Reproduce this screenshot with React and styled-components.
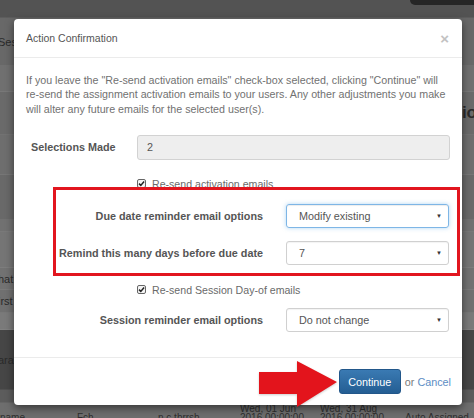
import React from 'react';
import styled, { createGlobalStyle } from 'styled-components';

const GlobalStyle = createGlobalStyle`
  html, body {
    margin: 0;
    padding: 0;
  }

  body {
    width: 474px;
    height: 418px;
    overflow: hidden;
    font-family: "Liberation Sans", Arial, sans-serif;
  }
`;

// the dimmed page behind the dialog, top to bottom
const bgRows = [
  { h: 18, bg: '#535353' },
  { h: 48, bg: '#686868', left: 'Ses' },
  { h: 26, bg: '#707070' },
  { h: 43, bg: '#6a6a6a', right: 'io', big: true },
  { h: 40, bg: '#6e6e6e' },
  { h: 45, bg: '#696969' },
  { h: 12, bg: '#717171' },
  { h: 36, bg: '#757575' },
  { h: 22, bg: '#727272', left: 'hat' },
  { h: 23, bg: '#707070', left: 'irst' },
  { h: 17, bg: '#7a7a7a' },
  { h: 60, bg: '#464646', left: 'ara' },
  { h: 13, bg: '#5c5c5c' },
];

function CheckBox() {
  return (
    <Box viewBox="0 0 9 9" width="9" height="9">
      <rect x="0.5" y="0.5" width="8" height="8" rx="1.5" fill="#f4f4f4" stroke="#666" />
      <path d="M2 4.6 L3.8 6.4 L7.1 2.4" fill="none" stroke="#222" strokeWidth="1.5" />
    </Box>
  );
}

function ActionConfirmation() {
  return (
    <Screen>
      <Page>
        { bgRows.map((row, i) => (
          <BgRow key={ i } $h={ row.h } $bg={ row.bg }>
            <BgText>{ row.left }</BgText>
            <BgText $big={ row.big }>{ row.right }</BgText>
          </BgRow>
        )) }
        <TableRow>
          <Cell $w={ 77 }>name</Cell>
          <Cell $w={ 81 }>Fch</Cell>
          <Cell $w={ 82 }>n.c.thrrsh</Cell>
          <Cell $w={ 80 }>Wed, 01 Jun<br />2016 00:00:00</Cell>
          <Cell $w={ 85 }>Wed, 31 Aug<br />2016 00:00:00</Cell>
          <Cell>Auto Assigned</Cell>
        </TableRow>
        <TopTab />
      </Page>

      <Modal>
        <Header>
          <Title>Action Confirmation</Title>
          <Close>×</Close>
        </Header>

        <Body>
          <Intro>
            If you leave the &quot;Re-send activation emails&quot; check-box selected, clicking &quot;Continue&quot; will
            <br />
            re-send the assignment activation emails to your users. Any other adjustments you make
            <br />
            will alter any future emails for the selected user(s).
          </Intro>

          <SelectionsRow>
            <SelectionsLabel>Selections Made</SelectionsLabel>
            <ReadOnlyInput>2</ReadOnlyInput>
          </SelectionsRow>

          <CheckRow $top={ 18 }>
            <CheckBox />
            <span>Re-send activation emails</span>
          </CheckRow>

          <Highlight>
            <SelectRow>
              <FieldLabel>Due date reminder email options</FieldLabel>
              <Select $focus>
                <span>Modify existing</span>
                <Caret>▼</Caret>
              </Select>
            </SelectRow>
            <SelectRow>
              <FieldLabel>Remind this many days before due date</FieldLabel>
              <Select>
                <span>7</span>
                <Caret>▼</Caret>
              </Select>
            </SelectRow>
          </Highlight>

          <CheckRow $top={ 8 }>
            <CheckBox />
            <span>Re-send Session Day-of emails</span>
          </CheckRow>

          <SelectRow $top={ 12 } $pad={ 1 }>
            <FieldLabel>Session reminder email options</FieldLabel>
            <Select>
              <span>Do not change</span>
              <Caret>▼</Caret>
            </Select>
          </SelectRow>
        </Body>

        <Footer>
          <ContinueButton type="button">Continue</ContinueButton>
          <FooterText>
            or <CancelLink>Cancel</CancelLink>
          </FooterText>
        </Footer>
      </Modal>

      <Arrow viewBox="0 0 78 46" width="78" height="46">
        <polygon points="0,11 38,11 38,0 78,21 38,46 38,33 0,33" fill="#e3141c" />
      </Arrow>
    </Screen>
  );
}

export default function App() {
  return (
    <>
      <GlobalStyle />
      <ActionConfirmation />
    </>
  );
}

const Screen = styled.div`
  position: relative;
  width: 474px;
  height: 418px;
  overflow: hidden;
  background-color: #5e5e5e;
`;

const Page = styled.div`
  display: flex;
  flex-direction: column;
  width: 100%;
  height: 100%;
`;

const BgRow = styled.div`
  display: flex;
  align-items: center;
  justify-content: space-between;
  flex: 0 0 ${({ $h }) => $h}px;
  background-color: ${({ $bg }) => $bg};
  border-bottom: 1px solid rgba(255, 255, 255, 0.06);
  box-sizing: border-box;
`;

const BgText = styled.span`
  color: #2a2a2a;
  font-size: ${({ $big }) => ($big ? '17px' : '11px')};
  font-weight: ${({ $big }) => ($big ? 700 : 400)};
  margin: 0 ${({ $big }) => ($big ? '-3px' : '0')} 0 -2px;
`;

const TableRow = styled.div`
  display: flex;
  align-items: flex-end;
  flex: 1;
  background-color: #6e6e6e;
  color: #2f2f2f;
  font-size: 10px;
  line-height: 9px;
  margin-bottom: -4px;
`;

const Cell = styled.div`
  flex: 0 0 ${({ $w }) => ($w ? `${$w}px` : 'auto')};
  white-space: nowrap;
  overflow: hidden;
`;

const TopTab = styled.div`
  position: absolute;
  top: -6px;
  left: 410px;
  width: 80px;
  height: 11px;
  border-radius: 5px;
  background-color: #262626;
`;

const Modal = styled.div`
  position: absolute;
  top: 19px;
  left: 14px;
  width: 448px;
  height: 386px;
  display: flex;
  flex-direction: column;
  background-color: #ffffff;
  border-radius: 4px;
  box-shadow: 0 3px 9px rgba(0, 0, 0, 0.5);
`;

const Header = styled.div`
  display: flex;
  align-items: center;
  justify-content: space-between;
  height: 39px;
  padding: 0 13px 0 12px;
  box-sizing: border-box;
  border-bottom: 1px solid #ebebeb;
`;

const Title = styled.h4`
  margin: 0;
  color: #555555;
  font-size: 10.5px;
  font-weight: 400;
`;

const Close = styled.span`
  color: #c2c2c2;
  font-size: 15px;
  font-weight: 700;
  line-height: 1;
`;

const Body = styled.div`
  flex: 1;
  display: flex;
  flex-direction: column;
  padding: 15px 12px 0 12px;
`;

const Intro = styled.p`
  margin: 0;
  color: #717171;
  font-size: 10.7px;
  line-height: 14.3px;
  white-space: nowrap;
`;

const SelectionsRow = styled.div`
  display: flex;
  align-items: center;
  margin-top: 19px;
`;

const SelectionsLabel = styled.label`
  width: 106px;
  padding-left: 5px;
  color: #555555;
  font-size: 10.8px;
  font-weight: 700;
`;

const ReadOnlyInput = styled.div`
  flex: 1;
  display: flex;
  align-items: center;
  height: 25px;
  padding-left: 9px;
  box-sizing: border-box;
  background-color: #eeeeee;
  border: 1px solid #d2d2d2;
  border-radius: 3px;
  color: #555555;
  font-size: 10.8px;
`;

const CheckRow = styled.div`
  display: flex;
  align-items: center;
  gap: 6px;
  height: 12px;
  margin-top: ${({ $top }) => $top}px;
  padding-left: 111px;
  color: #6a6a6a;
  font-size: 10.6px;
`;

const Box = styled.svg`
  flex: 0 0 auto;
`;

const Highlight = styled.div`
  position: relative;
  display: flex;
  flex-direction: column;
  gap: 13px;
  margin: -3px -10px 0 27px;
  padding: 14px 8px 8px 0;
  border: 3px solid #e2161f;
`;

const SelectRow = styled.div`
  display: flex;
  align-items: center;
  gap: 23px;
  margin-top: ${({ $top }) => $top || 0}px;
  padding-right: ${({ $pad }) => $pad || 0}px;
`;

const FieldLabel = styled.label`
  flex: 1;
  text-align: right;
  white-space: nowrap;
  color: #555555;
  font-size: 10.8px;
  font-weight: 700;
`;

const Select = styled.div`
  display: flex;
  align-items: center;
  justify-content: space-between;
  width: 163px;
  height: 24px;
  padding: 0 6px 0 12px;
  box-sizing: border-box;
  border: 1px solid ${({ $focus }) => ($focus ? '#7eb6e6' : '#d0d0d0')};
  border-radius: 3px;
  box-shadow: ${({ $focus }) => ($focus
    ? 'inset 0 1px 1px rgba(0, 0, 0, 0.075), 0 0 4px rgba(102, 175, 233, 0.5)'
    : 'inset 0 1px 1px rgba(0, 0, 0, 0.05)')};
  color: #555555;
  font-size: 10.8px;
`;

const Caret = styled.span`
  color: #333333;
  font-size: 6px;
`;

const Footer = styled.div`
  display: flex;
  align-items: center;
  justify-content: flex-end;
  gap: 4px;
  height: 48px;
  padding-right: 11px;
  box-sizing: border-box;
  border-top: 1px solid #ebebeb;
`;

const ContinueButton = styled.button`
  width: 62px;
  height: 25px;
  padding: 0;
  background-image: linear-gradient(to bottom, #3a7ab3 0%, #245e93 100%);
  border: 1px solid #22578a;
  border-radius: 3px;
  color: #ffffff;
  font-family: "Liberation Sans", Arial, sans-serif;
  font-size: 10.8px;
`;

const FooterText = styled.span`
  color: #7a7a7a;
  font-size: 10.8px;
`;

const CancelLink = styled.a`
  color: #5b8dc4;
`;

const Arrow = styled.svg`
  position: absolute;
  top: 361px;
  left: 259px;
  filter: drop-shadow(0 1px 1px rgba(0, 0, 0, 0.2));
`;
